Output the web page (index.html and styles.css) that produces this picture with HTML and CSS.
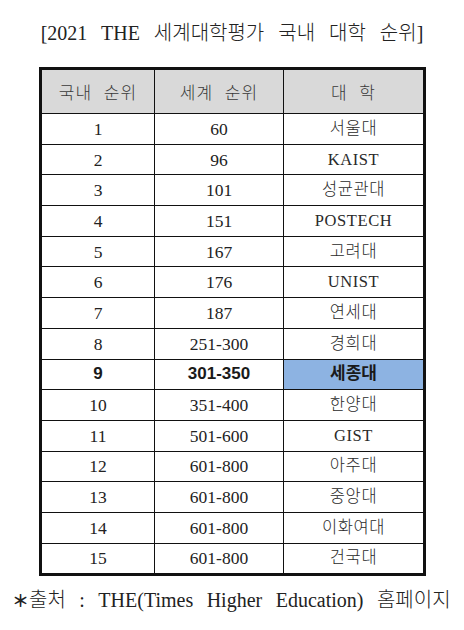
FILE: index.html
```html
<!DOCTYPE html>
<html lang="ko">
<head>
<meta charset="utf-8">
<link rel="stylesheet" href="styles.css">
</head>
<body>
<div class="page">
  <h1 class="title">[2021 THE 세계대학평가 국내 대학 순위]</h1>
  <table class="rank">
    <colgroup><col class="c1"><col class="c2"><col class="c3"></colgroup>
    <thead>
      <tr><th>국내 순위</th><th>세계 순위</th><th>대 학</th></tr>
    </thead>
    <tbody>
      <tr><td>1</td><td>60</td><td>서울대</td></tr>
      <tr><td>2</td><td>96</td><td>KAIST</td></tr>
      <tr><td>3</td><td>101</td><td>성균관대</td></tr>
      <tr><td>4</td><td>151</td><td>POSTECH</td></tr>
      <tr><td>5</td><td>167</td><td>고려대</td></tr>
      <tr><td>6</td><td>176</td><td>UNIST</td></tr>
      <tr><td>7</td><td>187</td><td>연세대</td></tr>
      <tr><td>8</td><td>251-300</td><td>경희대</td></tr>
      <tr class="hl"><td>9</td><td>301-350</td><td class="blue">세종대</td></tr>
      <tr><td>10</td><td>351-400</td><td>한양대</td></tr>
      <tr><td>11</td><td>501-600</td><td>GIST</td></tr>
      <tr><td>12</td><td>601-800</td><td>아주대</td></tr>
      <tr><td>13</td><td>601-800</td><td>중앙대</td></tr>
      <tr><td>14</td><td>601-800</td><td>이화여대</td></tr>
      <tr><td>15</td><td>601-800</td><td>건국대</td></tr>
    </tbody>
  </table>
  <p class="note"><span class="star">＊</span>출처 : THE(Times Higher Education) 홈페이지</p>
</div>
</body>
</html>
```
FILE: styles.css
```css
html, body {
  margin: 0;
  padding: 0;
  background: #ffffff;
}
.page {
  width: 464px;
  height: 630px;
  font-family: "Liberation Serif", "Noto Sans CJK KR Light", "Noto Sans CJK KR", serif;
  font-weight: normal;
  color: #222;
  padding-top: 22px;
  box-sizing: border-box;
}
.title {
  margin: 0;
  font-weight: normal;
  font-size: 20px;
  line-height: 22px;
  text-align: center;
  word-spacing: 9px;
}
.rank {
  margin: 23px 0 0 39px;
  width: 387px;
  border-collapse: collapse;
  border: 3px solid #111;
  font-size: 17.5px;
}
.c1 { width: 114px; }
.c2 { width: 129px; }
.rank th {
  background: #d9d9d9;
  height: 43px;
  padding: 0;
  border: 1px solid #111;
  font-size: 17px;
  color: #3a3a3a;
  word-spacing: 6px;
  letter-spacing: 1px;
  font-family: "Noto Sans CJK KR Light", "Noto Sans CJK KR", sans-serif;
  font-weight: normal;
}
.rank td {
  height: 29.7px;
  padding: 0;
  text-align: center;
  border: 1px solid #111;
  line-height: 18px;
}
.rank td:nth-child(3) {
  font-size: 16.5px;
  letter-spacing: 0.6px;
  color: #2a2a2a;
}
.rank tr.hl td {
  font-family: "Liberation Sans", "Noto Sans CJK KR", sans-serif;
  font-weight: bold;
  font-size: 17px;
  letter-spacing: 0;
  color: #1a1a1a;
}
.rank td.blue {
  background: #8db3e2;
}
.note {
  margin: 13px 0 0 12px;
  font-size: 20px;
  line-height: 22px;
  word-spacing: 8.5px;
  white-space: nowrap;
}
.star {
  font-family: "Noto Sans CJK KR", sans-serif;
  font-weight: bold;
  font-size: 17px;
}
```
